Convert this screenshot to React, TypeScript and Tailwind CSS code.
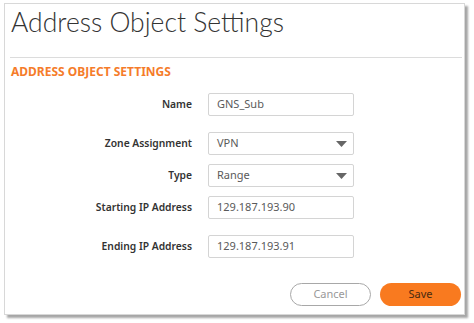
import React from "react";

const font = { fontFamily: '"Noto Sans", "Open Sans", sans-serif' };

function Row({ label, children, className }: { label: string; children: React.ReactNode; className?: string }) {
  return (
    <div className={"flex items-center " + (className ?? "")}>
      <div className="w-[187px] text-right text-[10.3px] font-semibold text-[#333] leading-none">{label}</div>
      <div className="ml-[16px]">{children}</div>
    </div>
  );
}

function Input({ value }: { value: string }) {
  return (
    <div className="w-[146px] h-[23px] border border-[#d4d4d4] rounded-[2px] bg-white flex items-center px-[8px] text-[11px] text-[#5a5a5a]">
      {value}
    </div>
  );
}

function Select({ value }: { value: string }) {
  return (
    <div className="w-[146px] h-[23px] border border-[#d4d4d4] rounded-[2px] bg-white flex items-center justify-between pl-[8px] pr-[6px] text-[11px] text-[#5a5a5a]">
      <span>{value}</span>
      <svg width="11" height="6" viewBox="0 0 11 6">
        <path d="M0 0 L11 0 L5.5 6 Z" fill="#666" />
      </svg>
    </div>
  );
}

export default function App() {
  return (
    <div className="w-[474px] h-[323px] bg-white pl-[4px] pt-[3px]" style={font}>
      <div className="w-[461px] h-[312px] border border-[#d8d8d8] bg-white shadow-[3px_3px_2px_rgba(0,0,0,0.35)] flex flex-col">
        <div className="h-[53px] pl-[6px] pt-[1px]">
          <div className="text-[26.5px] font-light text-[#333] leading-[34px]" style={{ fontFamily: 'Lato, "Noto Sans", sans-serif' }}>
            Address Object Settings
          </div>
        </div>
        <div className="h-px bg-[#dcdcdc] ml-[5px] mr-[2px]" />
        <div className="pl-[6px] mt-[7px] text-[12px] font-bold text-[#f57c2a] leading-[14px]">
          ADDRESS OBJECT SETTINGS
        </div>
        <Row label="Name" className="mt-[14px]">
          <Input value="GNS_Sub" />
        </Row>
        <Row label="Zone Assignment" className="mt-[16px]">
          <Select value="VPN" />
        </Row>
        <Row label="Type" className="mt-[9px]">
          <Select value="Range" />
        </Row>
        <Row label="Starting IP Address" className="mt-[9px]">
          <Input value="129.187.193.90" />
        </Row>
        <Row label="Ending IP Address" className="mt-[16px]">
          <Input value="129.187.193.91" />
        </Row>
        <div className="flex justify-end gap-[9px] mt-[25px] pr-[3px]">
          <div className="w-[81px] h-[23px] rounded-full border border-[#a8a8a8] flex items-center justify-center text-[11px] text-[#999]">
            Cancel
          </div>
          <div className="w-[81px] h-[23px] rounded-full bg-[#f97a1f] flex items-center justify-center text-[11px] text-[#4a2a10]">
            Save
          </div>
        </div>
      </div>
    </div>
  );
}
